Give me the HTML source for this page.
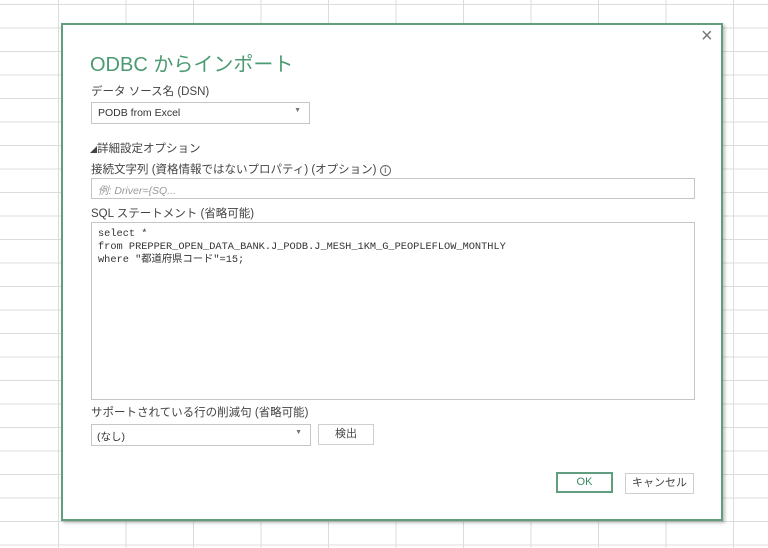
<!DOCTYPE html>
<html><head><meta charset="utf-8"><style>
*{margin:0;padding:0;box-sizing:border-box}
body{width:768px;height:548px;overflow:hidden;position:relative;background:#fff;font-family:"Liberation Sans","Noto Sans CJK JP",sans-serif;color:#333}
.grid{position:absolute;inset:0;background-image:linear-gradient(to right,#dcdcdc 1px,transparent 1px),linear-gradient(to bottom,#dcdcdc 1px,transparent 1px);background-size:67.5px 23.5px;background-position:58px 4px}
.dlg{position:absolute;left:61px;top:23px;width:662px;height:498px;background:#fff;border:2px solid #5f9e7e;box-shadow:2px 2px 3px rgba(0,0,0,.25)}
.a{position:absolute;white-space:nowrap}
.lbl{font-size:11.5px;color:#444}
.box{position:absolute;border:1px solid #c6c6c6;background:#fff}
.btn{position:absolute;border:1px solid #cfcfcf;background:#fff;font-size:11px;text-align:center;color:#444}
</style></head><body>
<div class="grid"></div>
<div class="dlg">
<div class="a" style="left:638px;top:0px;font-size:20px;color:#777">×</div>
<div class="a" style="left:27px;top:23px;font-size:20px;color:#4a9a72">ODBC からインポート</div>
<div class="a lbl" style="left:28px;top:58px">データ ソース名 (DSN)</div>
<div class="box" style="left:28px;top:77px;width:219px;height:22px"><span class="a" style="left:6px;top:4px;font-size:10.5px;color:#333">PODB from Excel</span><span class="a" style="right:8px;top:4px;font-size:7px;color:#777">▼</span></div>
<div class="a lbl" style="left:27px;top:115px"><span style="font-size:7px">◢</span>詳細設定オプション</div>
<div class="a lbl" style="left:28px;top:136px">接続文字列 (資格情報ではないプロパティ) (オプション) <span style="font-size:9px;border:1px solid #666;border-radius:50%;display:inline-block;width:11px;height:11px;line-height:9px;text-align:center">i</span></div>
<div class="box" style="left:28px;top:153px;width:604px;height:21px"><span class="a" style="left:6px;top:4px;font-size:10.5px;color:#999;font-style:italic">例: Driver={SQ...</span></div>
<div class="a lbl" style="left:28px;top:180px">SQL ステートメント (省略可能)</div>
<div class="box" style="left:28px;top:197px;width:604px;height:178px"><pre class="a" style="white-space:pre;left:6px;top:5px;font-family:'Liberation Mono','Noto Sans CJK JP',monospace;font-size:10.3px;line-height:13px;color:#333">select *
from PREPPER_OPEN_DATA_BANK.J_PODB.J_MESH_1KM_G_PEOPLEFLOW_MONTHLY
where "都道府県コード"=15;</pre></div>
<div class="a lbl" style="left:28px;top:379px">サポートされている行の削減句 (省略可能)</div>
<div class="box" style="left:28px;top:399px;width:220px;height:22px"><span class="a" style="left:5px;top:4px;font-size:10.5px">(なし)</span><span class="a" style="right:8px;top:4px;font-size:7px;color:#777">▼</span></div>
<div class="btn" style="left:255px;top:399px;width:56px;height:21px;line-height:19px">検出</div>
<div class="btn" style="left:493px;top:447px;width:57px;height:21px;line-height:17px;border:2px solid #5f9e7e;color:#3b8a62">OK</div>
<div class="btn" style="left:562px;top:448px;width:69px;height:21px;line-height:19px">キャンセル</div>
</div>
</body></html>
